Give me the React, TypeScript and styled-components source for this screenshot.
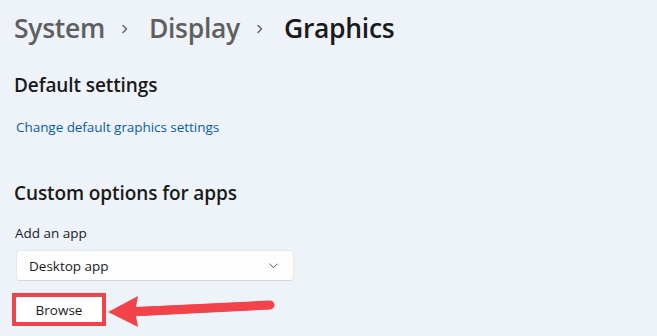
import React from "react"
import styled, { createGlobalStyle } from "styled-components"

const GlobalStyle = createGlobalStyle`
    html, body {
        margin: 0;
        padding: 0;
        background: #eef3f9;
    }
    body {
        font-family: "Open Sans", "Noto Sans", sans-serif;
        color: #1b1b1b;
    }
`

const Page = styled.div`
    position: relative;
    width: 657px;
    height: 336px;
    overflow: hidden;
    padding: 8px 0 0 14px;
    box-sizing: border-box;
`

const Breadcrumb = styled.div`
    display: flex;
    align-items: center;
    height: 40px;
`

const Crumb = styled.span<{ $current?: boolean }>`
    font-size: 26.5px;
    font-weight: 600;
    letter-spacing: -0.3px;
    color: ${({ $current }) => ($current ? "#1a1a1a" : "#5f5f5f")};
`

const Sep = styled.span`
    display: flex;
    align-items: center;
    margin: 2px 19px 0 15px;
    color: #5f5f5f;
`

const Section = styled.h2<{ $top: number }>`
    margin: ${({ $top }) => $top}px 0 0 0;
    font-size: 19px;
    font-weight: 600;
    line-height: 26px;
    letter-spacing: -0.1px;
    color: #1a1a1a;
`

const Link = styled.a`
    display: block;
    margin: 20px 0 0 2px;
    font-size: 13.5px;
    line-height: 18px;
    letter-spacing: -0.05px;
    color: #0a5da6;
    text-decoration: none;
`

const Label = styled.div`
    margin: 18px 0 0 1px;
    font-size: 13.5px;
    line-height: 18px;
    color: #1b1b1b;
`

const Dropdown = styled.div`
    display: flex;
    align-items: center;
    justify-content: space-between;
    box-sizing: border-box;
    width: 278px;
    height: 31px;
    margin: 8px 0 0 2px;
    padding: 0 15px 0 12px;
    background: #fdfdfe;
    border: 1px solid #e4e7eb;
    border-bottom-color: #d6d8dc;
    border-radius: 4px;
    font-size: 13.5px;
    color: #1b1b1b;
`

const Highlight = styled.div`
    display: inline-flex;
    margin: 12px 0 0 -2px;
    border: 4px solid #f2424a;
`

const BrowseButton = styled.button`
    width: 86px;
    height: 25px;
    border: 0;
    background: #ffffff;
    font-family: "Open Sans", "Noto Sans", sans-serif;
    font-size: 13.5px;
    color: #1b1b1b;
    padding: 0;
`

const ArrowOverlay = styled.svg`
    position: absolute;
    left: 100px;
    top: 288px;
`

const Chevron = ({ size = 10 }: { size?: number }) => (
    <svg width={size} height={size} viewBox="0 0 10 10">
        <path d="M3 1.5 L6.5 5 L3 8.5" fill="none" stroke="currentColor" strokeWidth="1.4" strokeLinecap="round" strokeLinejoin="round" />
    </svg>
)

const Caret = () => (
    <svg width="9" height="6" viewBox="0 0 9 6">
        <path d="M0.8 1 L4.5 4.7 L8.2 1" fill="none" stroke="#5a5a5a" strokeWidth="1" strokeLinecap="round" strokeLinejoin="round" />
    </svg>
)

export default function App() {
    return (
        <>
            <GlobalStyle />
            <Page>
                <Breadcrumb>
                    <Crumb>System</Crumb>
                    <Sep><Chevron /></Sep>
                    <Crumb>Display</Crumb>
                    <Sep><Chevron /></Sep>
                    <Crumb $current>Graphics</Crumb>
                </Breadcrumb>
                <Section $top={24}>Default settings</Section>
                <Link href="#">Change default graphics settings</Link>
                <Section $top={44}>Custom options for apps</Section>
                <Label>Add an app</Label>
                <Dropdown>
                    <span>Desktop app</span>
                    <Caret />
                </Dropdown>
                <Highlight>
                    <BrowseButton>Browse</BrowseButton>
                </Highlight>
                <ArrowOverlay width="185" height="44" viewBox="0 0 185 44">
                    <path d="M8 24 L38 8 L36 19 L170 13 L170 21 L36 28 L38 39 Z" fill="#f2424a" />
                    <line x1="40" y1="23.5" x2="170" y2="17" stroke="#f2424a" strokeWidth="9" strokeLinecap="round" />
                </ArrowOverlay>
            </Page>
        </>
    )
}
